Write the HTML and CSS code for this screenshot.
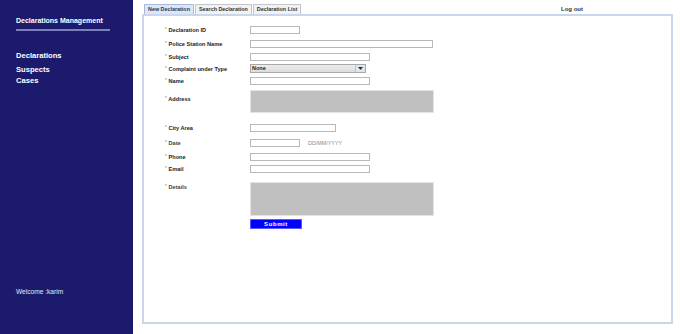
FILE: index.html
```html
<!DOCTYPE html>
<html lang="en">
<head>
  <meta charset="UTF-8">
  <title>Declarations Management</title>
  <link rel="stylesheet" href="styles.css">
</head>
<body>
  <div class="layout">
    <aside class="sidebar">
      <div class="brand">Declarations Management</div>
      <ul class="nav">
        <li><a href="#">Declarations</a></li>
        <li><a href="#">Suspects</a></li>
        <li><a href="#">Cases</a></li>
      </ul>
      <div class="welcome">Welcome :karim</div>
    </aside>

    <main class="main">
      <div class="topbar">
        <div class="tabs">
          <a class="tab active" href="#">New Declaration</a>
          <a class="tab" href="#">Search Declaration</a>
          <a class="tab" href="#">Declaration List</a>
        </div>
        <a class="logout" href="#">Log out</a>
      </div>

      <div class="panel">
        <form class="decl-form" onsubmit="return false;">
          <div class="row">
            <label><span class="req">*</span> Declaration ID</label>
            <input type="text" class="w-50">
          </div>
          <div class="row mt6">
            <label><span class="req">*</span> Police Station Name</label>
            <input type="text" class="w-183">
          </div>
          <div class="row mt5">
            <label><span class="req">*</span> Subject</label>
            <input type="text" class="w-120">
          </div>
          <div class="row mt3">
            <label><span class="req">*</span> Complaint under Type</label>
            <div class="select-box">
              <select>
                <option>None</option>
              </select>
              <span class="arrow">
                <svg width="5" height="3" viewBox="0 0 5 3"><path d="M0 0h5L2.5 3z" fill="#333"/></svg>
              </span>
            </div>
          </div>
          <div class="row mt4">
            <label><span class="req">*</span> Name</label>
            <input type="text" class="w-120">
          </div>
          <div class="row top mt5">
            <label class="lbl-area"><span class="req">*</span> Address</label>
            <textarea class="area-address"></textarea>
          </div>
          <div class="row mt11">
            <label><span class="req">*</span> City Area</label>
            <input type="text" class="w-86">
          </div>
          <div class="row mt7">
            <label class="light"><span class="req">*</span> Date</label>
            <input type="text" class="w-50">
            <span class="hint">DD/MM/YYYY</span>
          </div>
          <div class="row mt6">
            <label><span class="req">*</span> Phone</label>
            <input type="text" class="w-120">
          </div>
          <div class="row mt4">
            <label><span class="req">*</span> Email</label>
            <input type="text" class="w-120">
          </div>
          <div class="row top mt9">
            <label class="light lbl-details"><span class="req">*</span> Details</label>
            <textarea class="area-details"></textarea>
          </div>
          <div class="row mt3">
            <span class="spacer"></span>
            <button type="submit">Submit</button>
          </div>
        </form>
      </div>
    </main>
  </div>
</body>
</html>
```

FILE: styles.css
```css
body {
  margin: 0;
  font-family: "Liberation Sans", Arial, sans-serif;
  background: #fff;
}
.layout {
  display: flex;
  height: 334px;
}
.sidebar {
  width: 133px;
  background: #1b1a6d;
  color: #fff;
  display: flex;
  flex-direction: column;
  padding: 16px 0 38px 16px;
  box-sizing: border-box;
}
.brand {
  width: 94px;
  font-size: 7px;
  font-weight: bold;
  line-height: 9px;
  padding-bottom: 4px;
  border-bottom: 2px solid #7d80bd;
  white-space: nowrap;
}
.nav {
  list-style: none;
  margin: 19px 0 0;
  padding: 0;
}
.nav li {
  font-size: 7.6px;
  line-height: 11px;
}
.nav li:first-child {
  margin-bottom: 3px;
}
.nav a {
  color: #fff;
  text-decoration: none;
  font-weight: bold;
}
.welcome {
  margin-top: auto;
  font-size: 6.6px;
  line-height: 9px;
  color: #e8e8f4;
}
.main {
  flex: 1;
  padding: 4px 7px 10px 9px;
  display: flex;
  flex-direction: column;
}
.topbar {
  display: flex;
  align-items: flex-end;
  height: 10px;
}
.tabs {
  display: flex;
  gap: 1px;
  padding-left: 2px;
}
.tab {
  display: block;
  height: 10px;
  box-sizing: border-box;
  padding: 0 3px;
  font-size: 5.4px;
  line-height: 9px;
  font-weight: bold;
  color: #333;
  text-decoration: none;
  border: 1px solid #c6c6c6;
  border-bottom: none;
  background: #f2f2f2;
  border-radius: 1px 1px 0 0;
}
.tab.active {
  background: #dce6f5;
  border-color: #a9bbdc;
  color: #1e3a66;
}
.logout {
  margin-left: auto;
  margin-right: 90px;
  align-self: center;
  font-size: 6px;
  font-weight: bold;
  color: #333;
  text-decoration: none;
}
.panel {
  flex: 1;
  border: 2px solid #cad6ec;
  padding: 10px 0 0 21px;
}
.decl-form {
  display: flex;
  flex-direction: column;
}
.row {
  display: flex;
  align-items: center;
}
.row.top {
  align-items: flex-start;
}
.row label {
  width: 85px;
  flex-shrink: 0;
  font-size: 5.6px;
  line-height: 8px;
  font-weight: bold;
  color: #222;
}
.row label.light {
  color: #444;
}
.req {
  color: #888;
  font-weight: normal;
  font-size: 5px;
  position: relative;
  top: -1px;
}
.lbl-area {
  padding-top: 5px;
}
.lbl-details {
  padding-top: 1px;
}
.mt3 { margin-top: 3px; }
.mt4 { margin-top: 4px; }
.mt5 { margin-top: 5px; }
.mt6 { margin-top: 6px; }
.mt7 { margin-top: 7px; }
.mt9 { margin-top: 9px; }
.mt11 { margin-top: 11px; }
input {
  height: 8px;
  box-sizing: border-box;
  border: 1px solid #b8b8b8;
  padding: 0 2px;
  font-size: 5.5px;
  margin: 0;
}
.w-50 { width: 50px; }
.w-86 { width: 86px; }
.w-120 { width: 120px; }
.w-183 { width: 183px; }
textarea {
  width: 184px;
  box-sizing: border-box;
  border: 1px solid #e4e4e4;
  background: #c0c0c0;
  margin: 0;
  padding: 0;
  resize: none;
}
.area-address { height: 23px; }
.area-details { height: 34px; }
.hint {
  margin-left: 8px;
  font-size: 5.4px;
  color: #8a8a8a;
}
.select-box {
  display: flex;
  width: 116px;
  height: 9px;
  box-sizing: border-box;
  border: 1px solid #a8a8a8;
  background: linear-gradient(#ececec, #dcdcdc);
}
.select-box select {
  flex: 1;
  appearance: none;
  -webkit-appearance: none;
  border: none;
  background: transparent;
  font-family: "Liberation Sans", Arial, sans-serif;
  font-size: 5.5px;
  font-weight: bold;
  color: #222;
  padding: 0 0 0 1px;
  margin: 0;
  height: 7px;
  line-height: 7px;
}
.arrow {
  width: 9px;
  display: flex;
  align-items: center;
  justify-content: center;
  border-left: 1px solid #b8c4d8;
  background: #dde5f1;
}
.spacer {
  width: 85px;
}
button {
  width: 52px;
  height: 10px;
  box-sizing: border-box;
  background: #0000ff;
  border: 1px solid #5a5aff;
  color: #fff;
  font-family: "Liberation Sans", Arial, sans-serif;
  font-size: 6px;
  font-weight: bold;
  letter-spacing: 0.6px;
  padding: 0;
  cursor: pointer;
}
```
